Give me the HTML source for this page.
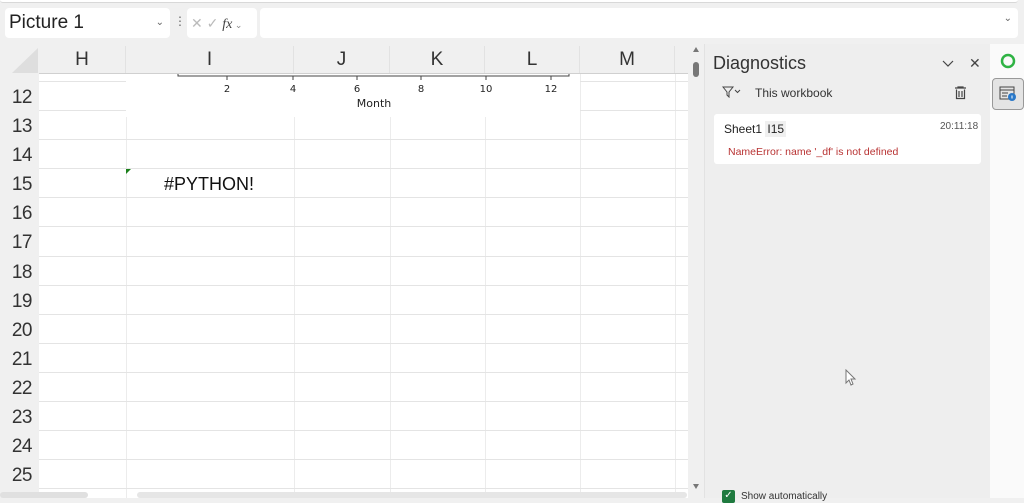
<!DOCTYPE html>
<html><head><style>
*{margin:0;padding:0;box-sizing:border-box}
body{width:1024px;height:498px;overflow:hidden;background:#f0f0f0;font-family:"Liberation Sans",sans-serif;position:relative}
.a{position:absolute}
.rh{position:absolute;left:0;width:39px;font-size:19px;color:#333;text-align:right;padding-right:7px;letter-spacing:-0.5px}
.ch{position:absolute;top:46px;height:28px;font-size:19px;color:#333;text-align:center;line-height:28px;border-right:1px solid #e2e2e2}
.hl{position:absolute;left:39px;width:649px;height:1px;background:#e4e4e4}
.vl{position:absolute;top:74px;height:424px;width:1px;background:#ececec}
</style></head><body>
<div class="a" style="left:0;top:0;width:1018px;height:3px;background:#fff;border-bottom:1px solid #d8d8d8;border-radius:0 0 4px 4px"></div>
<div class="a" style="left:5px;top:8px;width:165px;height:30px;background:#fff;border-radius:4px;font-size:19px;line-height:30px;padding-left:4px;color:#222">Picture 1<span style="position:absolute;right:6px;top:0;font-size:10px;color:#666">&#8964;</span></div>
<div class="a" style="left:174px;top:14px;font-size:12px;color:#666">&#8942;</div>
<div class="a" style="left:187px;top:8px;width:70px;height:30px;background:#fff;border-radius:4px;font-size:14px;line-height:30px;color:#bbb;padding-left:4px">✕ ✓ <i style="font-family:'Liberation Serif',serif;color:#444">fx</i><span style="font-size:9px;color:#888"> &#8964;</span></div>
<div class="a" style="left:260px;top:8px;width:758px;height:30px;background:#fff;border-radius:4px"><span style="position:absolute;right:6px;top:5px;font-size:10px;color:#666">&#8964;</span></div>
<svg class="a" style="left:8px;top:48px" width="30" height="26"><polygon points="30,0 30,25 4,25" fill="#dedede"/></svg>
<div class="a" style="left:39px;top:74px;width:649px;height:424px;background:#fff"></div>
<div class="vl" style="left:126px"></div><div class="vl" style="left:294px"></div><div class="vl" style="left:390px"></div><div class="vl" style="left:485px"></div><div class="vl" style="left:580px"></div><div class="vl" style="left:675px"></div>
<div class="hl" style="top:81px"></div><div class="hl" style="top:110px"></div><div class="hl" style="top:139px"></div><div class="hl" style="top:168px"></div><div class="hl" style="top:197px"></div><div class="hl" style="top:226px"></div><div class="hl" style="top:256px"></div><div class="hl" style="top:285px"></div><div class="hl" style="top:314px"></div><div class="hl" style="top:343px"></div><div class="hl" style="top:372px"></div><div class="hl" style="top:401px"></div><div class="hl" style="top:430px"></div><div class="hl" style="top:459px"></div><div class="hl" style="top:488px"></div>
<div class="a" style="left:126px;top:74px;width:454px;height:43px;background:#fff"></div>
<svg class="a" style="left:170px;top:72px" width="410" height="40" font-family="DejaVu Sans,sans-serif" font-size="10" fill="#222">
<path d="M8 1V4H399V1" stroke="#444" fill="none"/>
<g stroke="#444"><path d="M57 4v4M123 4v4M187 4v4M251 4v4M316 4v4M381 4v4"/></g>
<text x="57" y="20" text-anchor="middle">2</text><text x="123" y="20" text-anchor="middle">4</text><text x="187" y="20" text-anchor="middle">6</text><text x="251" y="20" text-anchor="middle">8</text><text x="316" y="20" text-anchor="middle">10</text><text x="381" y="20" text-anchor="middle">12</text>
<text x="204" y="35" text-anchor="middle" font-size="11">Month</text>
</svg>
<div class="a" style="left:126px;top:169px;width:0;height:0;border-top:5px solid #1a7f1a;border-right:5px solid transparent"></div>
<div class="a" style="left:164px;top:174px;font-size:18px;color:#111">#PYTHON!</div>
<div class="ch" style="left:39px;width:87px">H</div><div class="ch" style="left:126px;width:168px">I</div><div class="ch" style="left:294px;width:96px">J</div><div class="ch" style="left:390px;width:95px">K</div><div class="ch" style="left:485px;width:95px">L</div><div class="ch" style="left:580px;width:95px">M</div>
<div class="a" style="left:39px;top:73px;width:649px;height:1px;background:#d0d0d0"></div>
<div class="rh" style="top:87px">12</div><div class="rh" style="top:116px">13</div><div class="rh" style="top:145px">14</div><div class="rh" style="top:174px">15</div><div class="rh" style="top:203px">16</div><div class="rh" style="top:232px">17</div><div class="rh" style="top:262px">18</div><div class="rh" style="top:291px">19</div><div class="rh" style="top:320px">20</div><div class="rh" style="top:349px">21</div><div class="rh" style="top:378px">22</div><div class="rh" style="top:407px">23</div><div class="rh" style="top:436px">24</div><div class="rh" style="top:465px">25</div>
<div class="a" style="left:688px;top:44px;width:16px;height:454px;background:#f0f0f0"></div>
<div class="a" style="left:693px;top:47px;width:0;height:0;border-left:3px solid transparent;border-right:3px solid transparent;border-bottom:5px solid #777"></div>
<div class="a" style="left:693px;top:62px;width:6px;height:15px;background:#777;border-radius:3px"></div>
<div class="a" style="left:693px;top:484px;width:0;height:0;border-left:3px solid transparent;border-right:3px solid transparent;border-top:5px solid #777"></div>
<div class="a" style="left:0;top:492px;width:88px;height:6px;background:#e0e0e0;border-radius:3px"></div>
<div class="a" style="left:137px;top:492px;width:550px;height:6px;background:#e6e6e6;border-radius:3px"></div>
<div class="a" style="left:704px;top:44px;width:286px;height:454px;background:#eeeeee;border-left:1px solid #e2e2e2"></div>
<div class="a" style="left:713px;top:53px;font-size:18px;color:#333">Diagnostics</div>
<svg class="a" style="left:942px;top:60px" width="12" height="8"><path d="M1 1l5 5 5-5" fill="none" stroke="#444" stroke-width="1.2"/></svg>
<div class="a" style="left:969px;top:55px;font-size:14px;color:#444">✕</div>
<svg class="a" style="left:722px;top:86px" width="20" height="12"><path d="M1 1h10L7 6v5L5 9V6Z" fill="none" stroke="#444"/><path d="M13 4l2.5 2.5L18 4" fill="none" stroke="#444"/></svg>
<div class="a" style="left:755px;top:86px;font-size:12px;color:#333">This workbook</div>
<svg class="a" style="left:954px;top:86px" width="13" height="14"><path d="M1 2h11M4 2V1h5v1M2.5 3.5v9h8v-9M5 5v6M8 5v6" fill="none" stroke="#444" stroke-width="1.2"/></svg>
<div class="a" style="left:714px;top:114px;width:267px;height:50px;background:#fff;border-radius:3px"></div>
<div class="a" style="left:724px;top:122px;font-size:12px;color:#222">Sheet1 <span style="background:#f0f0f0;padding:1px 2px">I15</span></div>
<div class="a" style="left:940px;top:121px;font-size:10px;color:#555">20:11:18</div>
<div class="a" style="left:728px;top:146px;font-size:10.5px;color:#b83232">NameError: name '_df' is not defined</div>
<svg class="a" style="left:844px;top:369px" width="14" height="18"><path d="M2 1v13l3-3 2 5 2-1-2-5h4Z" fill="#fff" stroke="#777"/></svg>
<div class="a" style="left:722px;top:490px;width:13px;height:13px;background:#1f7a3f;border-radius:2px;color:#fff;font-size:10px;line-height:12px;text-align:center">✓</div>
<div class="a" style="left:741px;top:491px;font-size:10px;color:#333">Show automatically</div>
<div class="a" style="left:990px;top:44px;width:34px;height:454px;background:#fafafa"></div>
<svg class="a" style="left:1000px;top:53px" width="16" height="16"><circle cx="8" cy="8" r="6" fill="none" stroke="#2fb344" stroke-width="2.5"/></svg>
<div class="a" style="left:992px;top:78px;width:32px;height:32px;background:#e4e4e4;border:1px solid #999;border-radius:4px"></div>
<svg class="a" style="left:999px;top:86px" width="18" height="16"><rect x="1" y="1" width="14" height="12" fill="none" stroke="#444"/><path d="M1 4h14M3 7h6M3 10h5" stroke="#444"/><circle cx="13" cy="11" r="4" fill="#2a78c8"/><path d="M13 9.5v3" stroke="#fff"/></svg>
</body></html>
